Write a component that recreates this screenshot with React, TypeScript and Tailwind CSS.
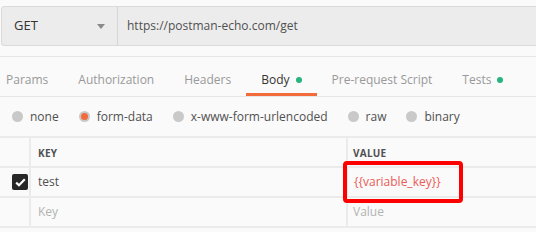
import React from 'react';

const tabs = [
  { label: 'Params' },
  { label: 'Authorization' },
  { label: 'Headers' },
  { label: 'Body', active: true, dot: true },
  { label: 'Pre-request Script' },
  { label: 'Tests', dot: true },
];

const bodyTypes = [
  { label: 'none' },
  { label: 'form-data', selected: true },
  { label: 'x-www-form-urlencoded' },
  { label: 'raw' },
  { label: 'binary' },
];

function Radio({ selected }: { selected?: boolean }) {
  return (
    <span className="w-[11px] h-[11px] rounded-full bg-[#c9c9c9] flex items-center justify-center">
      {selected && <span className="w-[7px] h-[7px] rounded-full bg-[#f26b3a]" />}
    </span>
  );
}

export default function App() {
  return (
    <div
      className="relative w-[536px] h-[232px] overflow-hidden bg-[#fafafa] text-[12px]"
      style={{ fontFamily: '"Open Sans", "Noto Sans", sans-serif' }}
    >
      {/* Request bar */}
      <div className="mt-[6px] ml-[1px] w-[560px] h-[40px] flex border border-[#dadada] rounded-[3px] bg-[#ececec]">
        <div className="w-[116px] flex items-center justify-between pl-[12px] pr-[12px] border-r border-[#d6d6d6]">
          <span className="text-[13px] text-[#333]">GET</span>
          <svg width="8" height="5" viewBox="0 0 8 5">
            <path d="M0 0 L8 0 L4 5 Z" fill="#8a8a8a" />
          </svg>
        </div>
        <div className="flex items-center pl-[9px] text-[12px] text-[#505050]">https://postman-echo.com/get</div>
      </div>

      {/* Tabs */}
      <div className="mt-[10px] h-[41px] border-t border-b border-[#e6e6e6] flex items-stretch">
        {tabs.map((t, i) => (
          <div
            key={t.label}
            className={`relative flex items-center pt-[6px] px-[15px] ${i === 0 ? '-ml-[9px]' : ''} ${t.active ? 'text-[#333]' : 'text-[#999]'}`}
          >
            <span>{t.label}</span>
            {t.dot && <span className="ml-[6px] w-[6px] h-[6px] rounded-full bg-[#26b47f]" />}
            {t.active && <span className="absolute left-0 right-0 bottom-0 h-[3px] bg-[#f26b3a]" />}
          </div>
        ))}
      </div>

      {/* Body types */}
      <div className="h-[39px] flex items-center pl-[12px] gap-[20px] text-[#505050]">
        {bodyTypes.map((b) => (
          <div key={b.label} className="flex items-center">
            <Radio selected={b.selected} />
            <span className="ml-[7px]">{b.label}</span>
          </div>
        ))}
      </div>

      {/* Form data table */}
      <div className="border-t-2 border-[#ebebeb]">
        <div className="h-[30px] flex border-b-2 border-[#ebebeb]">
          <div className="w-[31px] border-r-2 border-[#ebebeb]" />
          <div className="w-[317px] border-r-2 border-[#ebebeb] flex items-center pl-[7px] pt-[2px] text-[10px] font-bold text-[#505050] tracking-wide">
            KEY
          </div>
          <div className="flex-1 flex items-center pl-[5px] pt-[2px] text-[10px] font-bold text-[#505050] tracking-wide">VALUE</div>
        </div>
        <div className="h-[30px] flex border-b-2 border-[#ebebeb]">
          <div className="w-[31px] border-r-2 border-[#ebebeb] flex items-center pl-[12px]">
            <span className="w-[16px] h-[16px] rounded-[2px] bg-[#282828] flex items-center justify-center">
              <svg width="11" height="9" viewBox="0 0 11 9">
                <path d="M1.2 4.6 L4 7.3 L9.8 1.3" fill="none" stroke="#fff" strokeWidth="2.2" />
              </svg>
            </span>
          </div>
          <div className="w-[317px] border-r-2 border-[#ebebeb] flex items-center pl-[7px] text-[#505050]">test</div>
          <div className="flex-1 flex items-center pl-[6px] text-[#ec5a55]">{'{{variable_key}}'}</div>
        </div>
        <div className="h-[30px] flex border-b-2 border-[#ebebeb]">
          <div className="w-[31px] border-r-2 border-[#ebebeb]" />
          <div className="w-[317px] border-r-2 border-[#ebebeb] flex items-center pl-[7px] text-[#b3b3b3]">Key</div>
          <div className="flex-1 flex items-center pl-[5px] text-[#b3b3b3]">Value</div>
        </div>
      </div>

      {/* Highlight annotation */}
      <div className="absolute left-[343px] top-[161px] w-[120px] h-[42px] border-4 border-[#ff0000] rounded-[4px]" />
    </div>
  );
}
